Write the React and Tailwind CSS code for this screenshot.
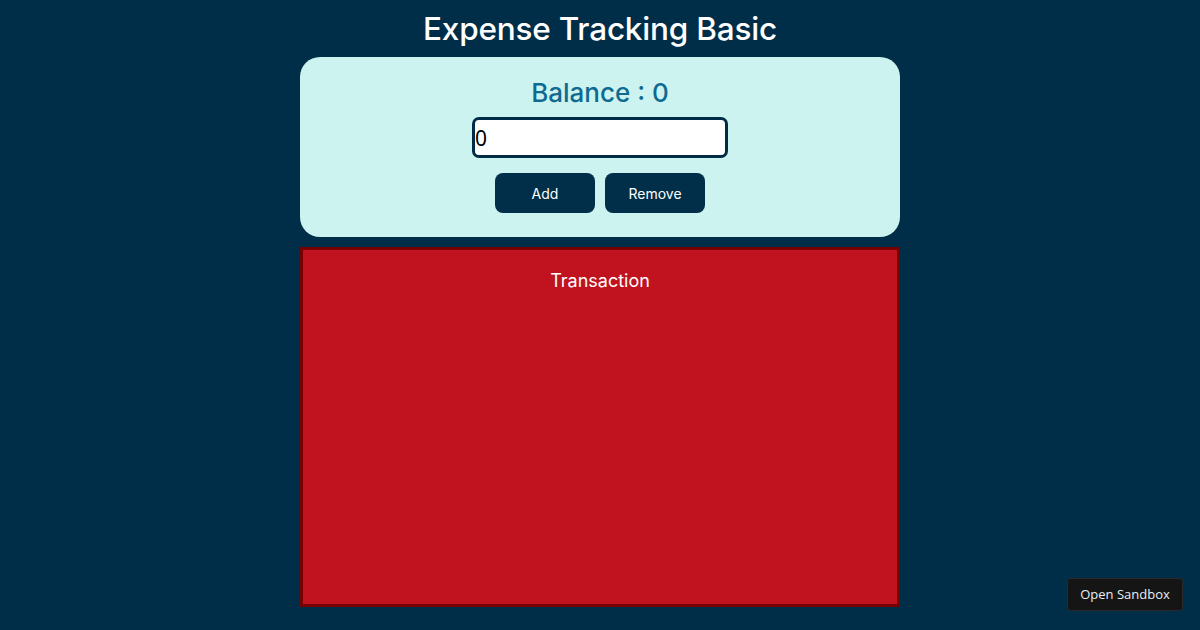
import React from "react";

export default function App() {
  return (
    <div className="min-h-screen w-full bg-[#002e48] relative" style={{ fontFamily: "Inter, 'Noto Sans', sans-serif" }}>
      <div className="flex flex-col items-center">
        <h1 className="text-white text-[31.5px] font-medium leading-none mt-[13px] h-[44px] tracking-[-0.2px]">Expense Tracking Basic</h1>
        <div className="w-[600px] h-[180px] bg-[#ccf3ef] rounded-[20px] flex flex-col items-center">
          <div className="mt-[21px] text-[26px] font-medium leading-[29px] text-[#0e6a90]">Balance : 0</div>
          <input
            defaultValue="0"
            className="mt-[10px] w-[256px] h-[41px] bg-white border-[3px] border-[#012c46] rounded-[7px] text-[21px] px-0 text-black outline-none"
            style={{ fontFamily: "'Noto Sans', sans-serif" }}
          />
          <div className="mt-[15px] flex gap-[10px]">
            <button className="w-[100px] h-[40px] rounded-[8px] bg-[#012e48] text-white text-[14px]">Add</button>
            <button className="w-[100px] h-[40px] rounded-[8px] bg-[#012e48] text-white text-[14px]">Remove</button>
          </div>
        </div>
        <div className="mt-[10px] w-[600px] h-[360px] bg-[#c1131f] border-[3px] border-[#780000] flex flex-col items-center">
          <div className="mt-[19px] text-white text-[18px] leading-[24px]">Transaction</div>
        </div>
      </div>
      <div
        className="absolute left-[1067px] top-[578px] w-[116px] h-[33px] bg-[#151515] border border-[#2a2a2a] rounded-[3px] flex items-center justify-center text-[13px] text-[#e8eef2]"
        style={{ fontFamily: "'Open Sans', 'Noto Sans', sans-serif" }}
      >
        Open Sandbox
      </div>
    </div>
  );
}
